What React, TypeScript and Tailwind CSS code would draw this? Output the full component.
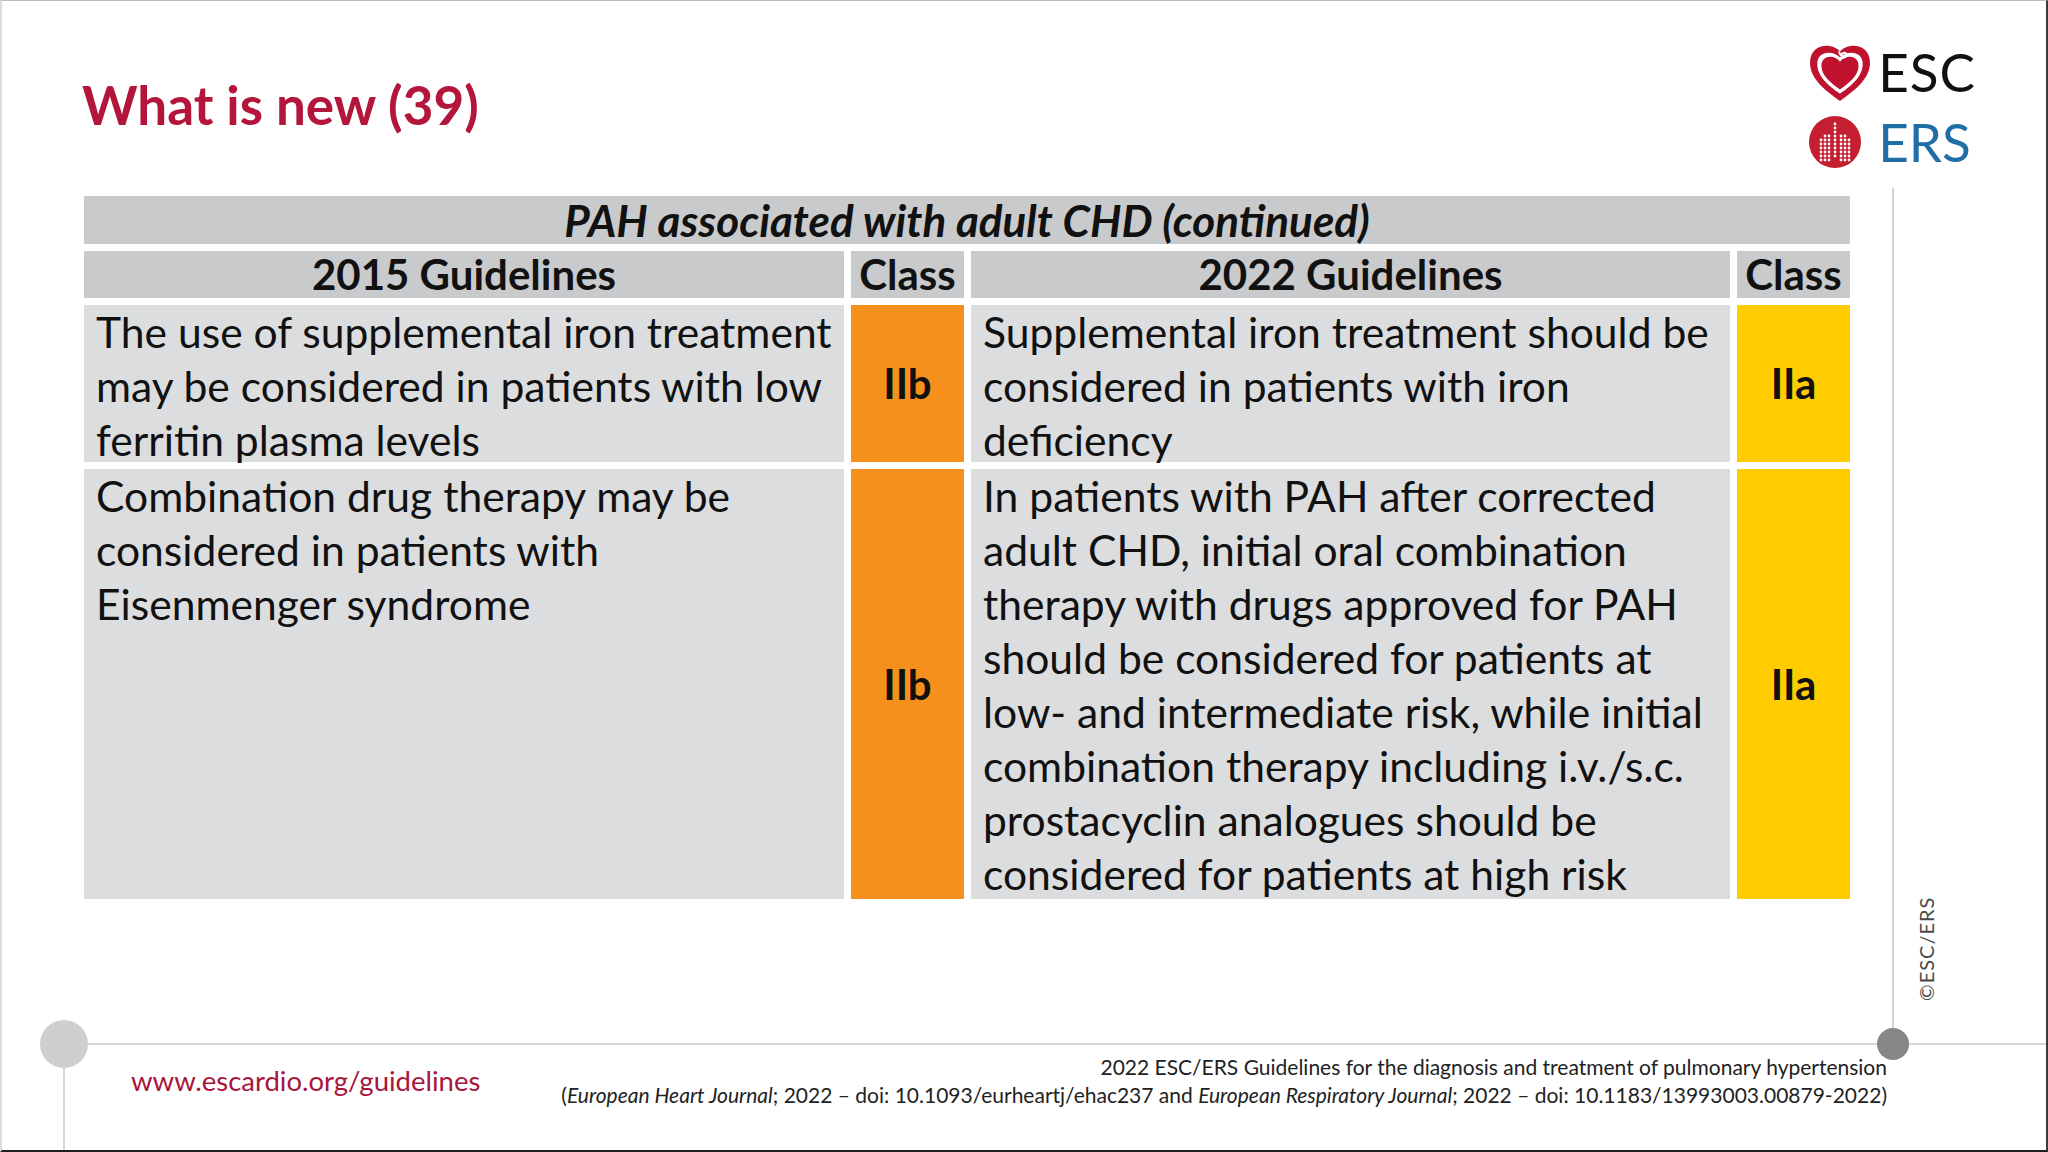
const font = "font-['Lato','Liberation_Sans',sans-serif]";

const rows = [
  {
    old: ["The use of supplemental iron treatment", "may be considered in patients with low", "ferritin plasma levels"],
    oldClass: "IIb",
    now: ["Supplemental iron treatment should be", "considered in patients with iron", "deficiency"],
    nowClass: "IIa",
    h: "h-[157px]",
  },
  {
    old: ["Combination drug therapy may be", "considered in patients with", "Eisenmenger syndrome"],
    oldClass: "IIb",
    now: [
      "In patients with PAH after corrected",
      "adult CHD, initial oral combination",
      "therapy with drugs approved for PAH",
      "should be considered for patients at",
      "low- and intermediate risk, while initial",
      "combination therapy including i.v./s.c.",
      "prostacyclin analogues should be",
      "considered for patients at high risk",
    ],
    nowClass: "IIa",
    h: "h-[430px]",
  },
];

function EscHeart() {
  return (
    <svg width="62" height="60" viewBox="0 0 60 58">
      <path
        d="M30 9 C 22 0, 1 1, 1 20 C 1 37, 18 48, 30 57 C 42 48, 59 37, 59 20 C 59 1, 38 0, 30 9 Z"
        fill="#c0122f"
      />
      <path
        d="M30 15 C 24 8, 8 8, 8 21 C 8 34, 20 43, 30 50 C 40 43, 52 34, 52 21 C 52 8, 36 8, 30 15 Z"
        fill="#ffffff"
      />
      <path
        d="M30 19 C 25 12, 12 12, 12 23 C 12 33, 22 40, 30 46 C 38 40, 48 33, 48 23 C 48 12, 35 12, 30 19 Z"
        fill="#c0122f"
      />
      <path d="M29 9 C 30 14, 35 17, 36 13 C 37 10, 33 9, 31 13" stroke="#ffffff" strokeWidth="2" fill="none" />
    </svg>
  );
}

function ErsLungs() {
  const dots: [number, number][] = [];
  for (let y = 8; y <= 40; y += 4) dots.push([26, y]);
  const lobe = [
    [12, 24, 44],
    [16, 20, 44],
    [20, 20, 44],
    [32, 20, 44],
    [36, 20, 44],
    [40, 24, 44],
  ];
  for (const [x, y0, y1] of lobe) for (let y = y0; y <= y1; y += 4) dots.push([x, y]);
  return (
    <svg width="52" height="52" viewBox="0 0 52 52">
      <circle cx="26" cy="26" r="26" fill="#c41e30" />
      {dots.map(([x, y], i) => (
        <circle key={i} cx={x} cy={y} r="1.4" fill="#ffffff" />
      ))}
    </svg>
  );
}

function Lines({ lines }: { lines: string[] }) {
  return (
    <div className="pl-[12px] text-[42.6px] leading-[54px] text-[#111]">
      {lines.map((l) => (
        <div key={l} className="whitespace-nowrap">
          {l}
        </div>
      ))}
    </div>
  );
}

export default function App() {
  return (
    <div
      className={`relative flex h-[1152px] w-[2048px] flex-col overflow-hidden border-t border-l-2 border-r-2 border-b-2 border-t-[#bdbdbd] border-l-[#dcdcdc] border-r-[#3a3a3a] border-b-[#1e1e1e] bg-white ${font}`}
    >
      {/* slide decoration */}
      <div className="absolute left-[1890px] top-[187px] h-[856px] w-[2px] bg-[#d3d3d3]" />
      <div className="absolute left-[61px] top-[1042px] h-[2px] w-[1990px] bg-[#d6d6d6]" />
      <div className="absolute left-[61px] top-[1043px] h-[110px] w-[2px] bg-[#d6d6d6]" />
      <div className="absolute left-[38px] top-[1019px] h-[48px] w-[48px] rounded-full bg-[#cfcfcf]" />
      <div className="absolute left-[1875px] top-[1027px] h-[32px] w-[32px] rounded-full bg-[#878787]" />
      <div className="absolute left-[1877px] top-[941px] w-[94px] -rotate-90 text-center text-[20px] leading-[24px] tracking-[1px] text-[#4a4a4a]">
        ©ESC/ERS
      </div>

      {/* header */}
      <div className="flex h-[195px] shrink-0 items-start justify-between">
        <h1 className="pl-[80px] pt-[72px] text-[53px] font-bold leading-[64px] text-[#b3163a]">What is new (39)</h1>
        <div className="mr-[70px] mt-[41px] flex flex-col gap-[13px]">
          <div className="flex items-center gap-[7px]">
            <EscHeart />
            <span className="text-[53px] leading-[60px] tracking-[1px] text-[#111]">ESC</span>
          </div>
          <div className="flex items-center gap-[17px]">
            <ErsLungs />
            <span className="text-[53px] leading-[54px] text-[#1f6ea6]">ERS</span>
          </div>
        </div>
      </div>

      {/* table */}
      <div className="ml-[82px] grid grid-cols-[760px_113px_759px_113px] gap-x-[7px] gap-y-[7px]">
        <div className="col-span-4 flex h-[48px] items-center justify-center bg-[#c9cacc] text-[44px] font-bold italic text-[#111]">
          PAH associated with adult CHD (continued)
        </div>
        <div className="flex h-[47px] items-center justify-center bg-[#c9cacc] text-[42px] font-bold text-[#111]">
          2015 Guidelines
        </div>
        <div className="flex h-[47px] items-center justify-center bg-[#c9cacc] text-[42px] font-bold text-[#111]">
          Class
        </div>
        <div className="flex h-[47px] items-center justify-center bg-[#c9cacc] text-[42px] font-bold text-[#111]">
          2022 Guidelines
        </div>
        <div className="flex h-[47px] items-center justify-center bg-[#c9cacc] text-[42px] font-bold text-[#111]">
          Class
        </div>
        {rows.map((r, i) => (
          <div key={i} className="contents">
            <div className={`${r.h} bg-[#dcdddf]`}>
              <Lines lines={r.old} />
            </div>
            <div className={`${r.h} flex items-center justify-center bg-[#f5901c] text-[42px] font-bold text-[#111]`}>
              {r.oldClass}
            </div>
            <div className={`${r.h} bg-[#dcdddf]`}>
              <Lines lines={r.now} />
            </div>
            <div className={`${r.h} flex items-center justify-center bg-[#ffcc00] text-[42px] font-bold text-[#111]`}>
              {r.nowClass}
            </div>
          </div>
        ))}
      </div>

      {/* footer */}
      <div className="mt-auto mb-[40px] flex h-[58px] items-center justify-between pl-[129px] pr-[159px]">
        <span className="text-[27.5px] text-[#a8153d]">www.escardio.org/guidelines</span>
        <div className="text-right text-[21px] leading-[28px] text-[#222]">
          <div>2022 ESC/ERS Guidelines for the diagnosis and treatment of pulmonary hypertension</div>
          <div>
            (<i>European Heart Journal</i>; 2022 – doi: 10.1093/eurheartj/ehac237 and <i>European Respiratory Journal</i>; 2022 – doi: 10.1183/13993003.00879-2022)
          </div>
        </div>
      </div>
    </div>
  );
}
